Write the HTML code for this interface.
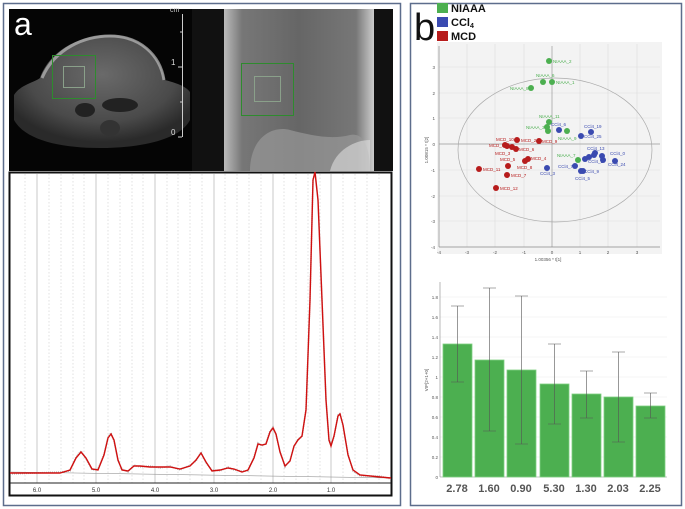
<!DOCTYPE html>
<html><head><meta charset="utf-8"><style>
html,body{margin:0;padding:0;background:#fff;}
body{width:685px;height:509px;overflow:hidden;position:relative;font-family:"Liberation Sans",sans-serif;}
</style></head><body>
<svg width="685" height="509" viewBox="0 0 685 509" xmlns="http://www.w3.org/2000/svg" style="position:absolute;left:0;top:0" font-family="Liberation Sans, sans-serif">
<defs>
<radialGradient id="body" cx="0.5" cy="0.35" r="0.6">
<stop offset="0" stop-color="#6a6a6a"/><stop offset="0.7" stop-color="#4a4a4a"/><stop offset="1" stop-color="#2a2a2a"/></radialGradient>
<linearGradient id="cor" x1="0" x2="1" y1="0" y2="0">
<stop offset="0" stop-color="#bbb"/><stop offset="0.12" stop-color="#777"/><stop offset="0.5" stop-color="#666"/><stop offset="0.88" stop-color="#777"/><stop offset="1" stop-color="#ccc"/></linearGradient>
</defs>
<!-- panel frames -->
<rect x="3.5" y="3.5" width="397" height="502" fill="#fff" stroke="#5d6d8c" stroke-width="1.5"/>
<rect x="410.5" y="3.5" width="271" height="502" fill="#fff" stroke="#5d6d8c" stroke-width="1.5"/>
<!-- MRI -->
<rect x="9" y="9" width="384" height="162" fill="#050505"/>
<path d="M14,95 C20,85 35,82 40,78 C50,50 80,35 110,35 C140,35 160,55 165,80 C172,82 185,85 190,92 L190,120 C180,140 140,148 100,148 C60,148 25,140 14,120 Z" fill="url(#body)"/>
<path d="M42,78 C55,48 85,36 110,36 C140,36 160,55 164,80" fill="none" stroke="#bbb" stroke-width="3" opacity="0.7"/>
<ellipse cx="120" cy="105" rx="18" ry="7" fill="#222"/><ellipse cx="85" cy="110" rx="10" ry="7" fill="#222"/><ellipse cx="110" cy="128" rx="10" ry="8" fill="#333"/>
<rect x="192" y="9" width="201" height="162" fill="#111"/>
<rect x="224" y="9" width="150" height="162" fill="url(#cor)"/>
<path d="M250,171 C250,140 270,125 290,130 C310,135 330,140 350,135 C365,132 370,150 370,171 Z" fill="#999" opacity="0.7"/>
<path d="M330,171 C335,150 355,140 370,140 L370,171 Z" fill="#ddd" opacity="0.6"/>
<rect x="52.5" y="55.5" width="43" height="43" fill="none" stroke="#2e8b2e" stroke-width="1"/>
<rect x="63.5" y="66.5" width="21" height="21" fill="none" stroke="#8aa08a" stroke-width="1"/>
<rect x="241.5" y="63.5" width="52" height="52" fill="none" stroke="#2e8b2e" stroke-width="1"/>
<rect x="254.5" y="76.5" width="26" height="25" fill="none" stroke="#8aa08a" stroke-width="1"/>
<line x1="182.5" y1="14" x2="182.5" y2="137" stroke="#ccc" stroke-width="1"/>
<g stroke="#ccc" stroke-width="1"><line x1="178" y1="67" x2="182" y2="67"/><line x1="178" y1="137" x2="182" y2="137"/><line x1="180" y1="32" x2="182" y2="32"/><line x1="180" y1="102" x2="182" y2="102"/></g>
<text x="171" y="65" fill="#ddd" font-size="8">1</text>
<text x="171" y="135" fill="#ddd" font-size="8">0</text>
<text x="170" y="12" fill="#ccc" font-size="7">cm</text>
<text x="14" y="35" fill="#fff" font-size="32">a</text>
<!-- spectrum -->
<rect x="9.5" y="172.5" width="382" height="323" fill="#fff" stroke="#111" stroke-width="2"/>
<g stroke="#ccc" stroke-width="0.6" stroke-dasharray="1.5,2">
<line x1="25" y1="174" x2="25" y2="483"/><line x1="49" y1="174" x2="49" y2="483"/><line x1="61" y1="174" x2="61" y2="483"/><line x1="73" y1="174" x2="73" y2="483"/><line x1="84" y1="174" x2="84" y2="483"/><line x1="108" y1="174" x2="108" y2="483"/><line x1="120" y1="174" x2="120" y2="483"/><line x1="132" y1="174" x2="132" y2="483"/><line x1="143" y1="174" x2="143" y2="483"/><line x1="167" y1="174" x2="167" y2="483"/><line x1="178" y1="174" x2="178" y2="483"/><line x1="190" y1="174" x2="190" y2="483"/><line x1="202" y1="174" x2="202" y2="483"/><line x1="225" y1="174" x2="225" y2="483"/><line x1="237" y1="174" x2="237" y2="483"/><line x1="249" y1="174" x2="249" y2="483"/><line x1="261" y1="174" x2="261" y2="483"/><line x1="284" y1="174" x2="284" y2="483"/><line x1="296" y1="174" x2="296" y2="483"/><line x1="308" y1="174" x2="308" y2="483"/><line x1="320" y1="174" x2="320" y2="483"/><line x1="343" y1="174" x2="343" y2="483"/><line x1="355" y1="174" x2="355" y2="483"/><line x1="367" y1="174" x2="367" y2="483"/><line x1="379" y1="174" x2="379" y2="483"/></g>
<g stroke="#bbb" stroke-width="0.8"><line x1="37" y1="174" x2="37" y2="483"/><line x1="96" y1="174" x2="96" y2="483"/><line x1="155" y1="174" x2="155" y2="483"/><line x1="214" y1="174" x2="214" y2="483"/><line x1="273" y1="174" x2="273" y2="483"/><line x1="331" y1="174" x2="331" y2="483"/></g>
<line x1="10" y1="472" x2="391" y2="478" stroke="#999" stroke-width="0.6"/>
<line x1="10" y1="483" x2="391" y2="483" stroke="#222" stroke-width="1"/>
<g font-size="6" fill="#333" text-anchor="middle"><text x="37" y="492">6.0</text><text x="96" y="492">5.0</text><text x="155" y="492">4.0</text><text x="214" y="492">3.0</text><text x="273" y="492">2.0</text><text x="331" y="492">1.0</text></g>
<polyline fill="none" stroke="#888" stroke-width="1.6" opacity="0.6" stroke-dasharray="1,1" points="10,474 60,472 70,471 76,457 81,451 86,459 92,470 98,469 104,454 108,437 111,433 114,441 118,461 122,469 128,472 134,465 140,467 150,466 160,468 170,466 180,470 190,465 196,461 201,452 206,463 212,470 220,471 228,467 234,470 242,471 248,471 254,457 258,443 262,446 266,443 270,431 273,427 276,435 280,451 285,467 290,460 294,447 298,439 302,437 306,409 310,300 313,180 315,172 318,200 322,300 326,400 329,441 331,445 334,437 338,415 340,413 343,426 348,454 353,471 360,476 380,476 391,479"/>
<polyline fill="none" stroke="#d01010" stroke-width="1.4" points="10,473 60,473 70,470 76,458 81,452 86,458 92,469 98,470 104,455 108,438 111,434 114,440 118,460 122,470 128,471 134,466 140,466 150,467 160,467 170,467 180,469 190,466 196,460 201,453 206,462 212,471 220,470 228,468 234,469 242,472 248,470 254,458 258,444 262,445 266,444 270,432 273,428 276,434 280,452 285,466 290,461 294,446 298,440 302,436 306,410 310,300 313,180 315,172 318,200 322,300 326,400 329,440 331,446 334,436 338,416 340,414 343,425 348,455 353,470 360,475 380,477 391,478"/>
<!-- panel b legend -->
<rect x="437" y="3" width="11" height="10" fill="#4caf50"/><text x="451" y="12" font-size="11" font-weight="bold" fill="#111">NIAAA</text>
<rect x="437" y="17" width="11" height="10" fill="#3a4ab0"/><text x="451" y="26" font-size="11" font-weight="bold" fill="#111">CCl<tspan font-size="7" dy="2">4</tspan></text>
<rect x="437" y="31" width="11" height="10" fill="#b71c1c"/><text x="451" y="40" font-size="11" font-weight="bold" fill="#111">MCD</text>
<text x="414" y="40" font-size="38" fill="#111">b</text>
<!-- scatter -->
<rect x="437" y="42" width="225" height="212" fill="#f3f3f3"/>
<g stroke="#ddd" stroke-width="0.6"><line x1="467" y1="44" x2="467" y2="247"/><line x1="495" y1="44" x2="495" y2="247"/><line x1="524" y1="44" x2="524" y2="247"/><line x1="580" y1="44" x2="580" y2="247"/><line x1="608" y1="44" x2="608" y2="247"/><line x1="637" y1="44" x2="637" y2="247"/>
<line x1="439" y1="67" x2="660" y2="67"/><line x1="439" y1="93" x2="660" y2="93"/><line x1="439" y1="118" x2="660" y2="118"/><line x1="439" y1="170" x2="660" y2="170"/><line x1="439" y1="196" x2="660" y2="196"/><line x1="439" y1="221" x2="660" y2="221"/></g>
<line x1="439" y1="144" x2="660" y2="144" stroke="#999" stroke-width="0.7"/>
<line x1="552" y1="46" x2="552" y2="247" stroke="#999" stroke-width="0.7"/>
<line x1="439" y1="247" x2="660" y2="247" stroke="#888" stroke-width="0.7"/>
<line x1="439" y1="46" x2="439" y2="247" stroke="#888" stroke-width="0.7"/>
<ellipse cx="555" cy="150" rx="97" ry="72" fill="none" stroke="#aaa" stroke-width="0.7"/>
<g font-size="4.5" fill="#555" text-anchor="middle"><text x="439" y="254">-4</text><text x="467" y="254">-3</text><text x="495" y="254">-2</text><text x="524" y="254">-1</text><text x="552" y="254">0</text><text x="580" y="254">1</text><text x="608" y="254">2</text><text x="637" y="254">3</text><text x="548" y="261">1.00356 * t[1]</text></g>
<g font-size="4.5" fill="#555" text-anchor="end"><text x="435" y="69">3</text><text x="435" y="95">2</text><text x="435" y="120">1</text><text x="435" y="146">0</text><text x="435" y="172">-1</text><text x="435" y="198">-2</text><text x="435" y="223">-3</text><text x="435" y="249">-4</text></g>
<text x="428" y="150" font-size="4.5" fill="#555" transform="rotate(-90 428 150)" text-anchor="middle">1.00815 * t[2]</text>
<g fill="#4caf50"><circle cx="549" cy="61" r="3"/><circle cx="543" cy="82" r="3"/><circle cx="552" cy="82" r="3"/><circle cx="531" cy="88" r="3"/><circle cx="549" cy="122" r="3"/><circle cx="547" cy="127" r="3"/><circle cx="548" cy="131" r="3"/><circle cx="567" cy="131" r="3"/><circle cx="578" cy="160" r="3"/></g>
<g fill="#3a4ab0"><circle cx="559" cy="130" r="3"/><circle cx="591" cy="132" r="3"/><circle cx="581" cy="136" r="3"/><circle cx="595" cy="153" r="3"/><circle cx="594" cy="155" r="3"/><circle cx="589" cy="157" r="3"/><circle cx="585" cy="159" r="3"/><circle cx="602" cy="156" r="3"/><circle cx="603" cy="160" r="3"/><circle cx="615" cy="161" r="3"/><circle cx="575" cy="166" r="3"/><circle cx="547" cy="168" r="3"/><circle cx="581" cy="171" r="3"/><circle cx="583" cy="171" r="3"/></g>
<g fill="#b71c1c"><circle cx="517" cy="140" r="3"/><circle cx="539" cy="141" r="3"/><circle cx="505" cy="145" r="3"/><circle cx="507" cy="146" r="3"/><circle cx="512" cy="147" r="3"/><circle cx="516" cy="149" r="3"/><circle cx="528" cy="159" r="3"/><circle cx="525" cy="161" r="3"/><circle cx="508" cy="166" r="3"/><circle cx="479" cy="169" r="3"/><circle cx="507" cy="175" r="3"/><circle cx="496" cy="188" r="3"/></g>
<g font-size="4.5" fill="#4caf50"><text x="553" y="63">NIAAA_2</text><text x="536" y="77">NIAAA_6</text><text x="556" y="84">NIAAA_1</text><text x="510" y="90">NIAAA_8</text><text x="539" y="118">NIAAA_11</text><text x="526" y="129">NIAAA_3</text><text x="558" y="140">NIAAA_9</text><text x="557" y="157">NIAAA_7</text></g>
<g font-size="4.5" fill="#3a4ab0"><text x="551" y="126">CCl4_6</text><text x="584" y="128">CCl4_19</text><text x="584" y="138">CCl4_25</text><text x="587" y="150">CCl4_13</text><text x="610" y="155">CCl4_0</text><text x="608" y="166">CCl4_24</text><text x="588" y="163">CCl4_1</text><text x="558" y="168">CCl4_7</text><text x="540" y="175">CCl4_3</text><text x="575" y="180">CCl4_5</text><text x="584" y="173">CCl4_9</text></g>
<g font-size="4.5" fill="#b71c1c"><text x="496" y="141">MCD_10</text><text x="521" y="142">MCD_2</text><text x="542" y="143">MCD_9</text><text x="489" y="147">MCD_1</text><text x="495" y="155">MCD_3</text><text x="519" y="151">MCD_6</text><text x="500" y="161">MCD_5</text><text x="531" y="160">MCD_4</text><text x="517" y="169">MCD_8</text><text x="483" y="171">MCD_11</text><text x="511" y="177">MCD_7</text><text x="500" y="190">MCD_12</text></g>
<!-- bar chart -->
<g stroke="#eee" stroke-width="0.6"><line x1="440" y1="297" x2="667" y2="297"/><line x1="440" y1="317" x2="667" y2="317"/><line x1="440" y1="337" x2="667" y2="337"/><line x1="440" y1="357" x2="667" y2="357"/><line x1="440" y1="377" x2="667" y2="377"/><line x1="440" y1="397" x2="667" y2="397"/><line x1="440" y1="417" x2="667" y2="417"/><line x1="440" y1="437" x2="667" y2="437"/><line x1="440" y1="457" x2="667" y2="457"/></g>
<line x1="440" y1="282" x2="440" y2="477" stroke="#888" stroke-width="0.6"/>
<line x1="440" y1="477" x2="667" y2="477" stroke="#888" stroke-width="0.6"/>
<g font-size="4.5" fill="#555" text-anchor="end"><text x="438" y="299">1.8</text><text x="438" y="319">1.6</text><text x="438" y="339">1.4</text><text x="438" y="359">1.2</text><text x="438" y="379">1</text><text x="438" y="399">0.8</text><text x="438" y="419">0.6</text><text x="438" y="439">0.4</text><text x="438" y="459">0.2</text><text x="438" y="479">0</text></g>
<text x="428" y="380" font-size="4.5" fill="#555" transform="rotate(-90 428 380)" text-anchor="middle">VIP[2+1+0]</text>
<g fill="#4caf50" stroke="#7fcf82" stroke-width="0.8">
<rect x="443" y="344" width="29" height="133"/><rect x="475" y="360" width="29" height="117"/><rect x="507" y="370" width="29" height="107"/><rect x="540" y="384" width="29" height="93"/><rect x="572" y="394" width="29" height="83"/><rect x="604" y="397" width="29" height="80"/><rect x="636" y="406" width="29" height="71"/></g>
<g stroke="#555" stroke-width="0.6" fill="none">
<path d="M457.5,306V382M451,306H464M451,382H464"/>
<path d="M489.5,288V431M483,288H496M483,431H496"/>
<path d="M521.5,296V444M515,296H528M515,444H528"/>
<path d="M554.5,344V424M548,344H561M548,424H561"/>
<path d="M586.5,371V418M580,371H593M580,418H593"/>
<path d="M618.5,352V442M612,352H625M612,442H625"/>
<path d="M650.5,393V418M644,393H657M644,418H657"/></g>
<g font-size="11" font-weight="bold" fill="#555" text-anchor="middle"><text x="457" y="492">2.78</text><text x="489" y="492">1.60</text><text x="521" y="492">0.90</text><text x="554" y="492">5.30</text><text x="586" y="492">1.30</text><text x="618" y="492">2.03</text><text x="650" y="492">2.25</text></g>
</svg>
</body></html>
